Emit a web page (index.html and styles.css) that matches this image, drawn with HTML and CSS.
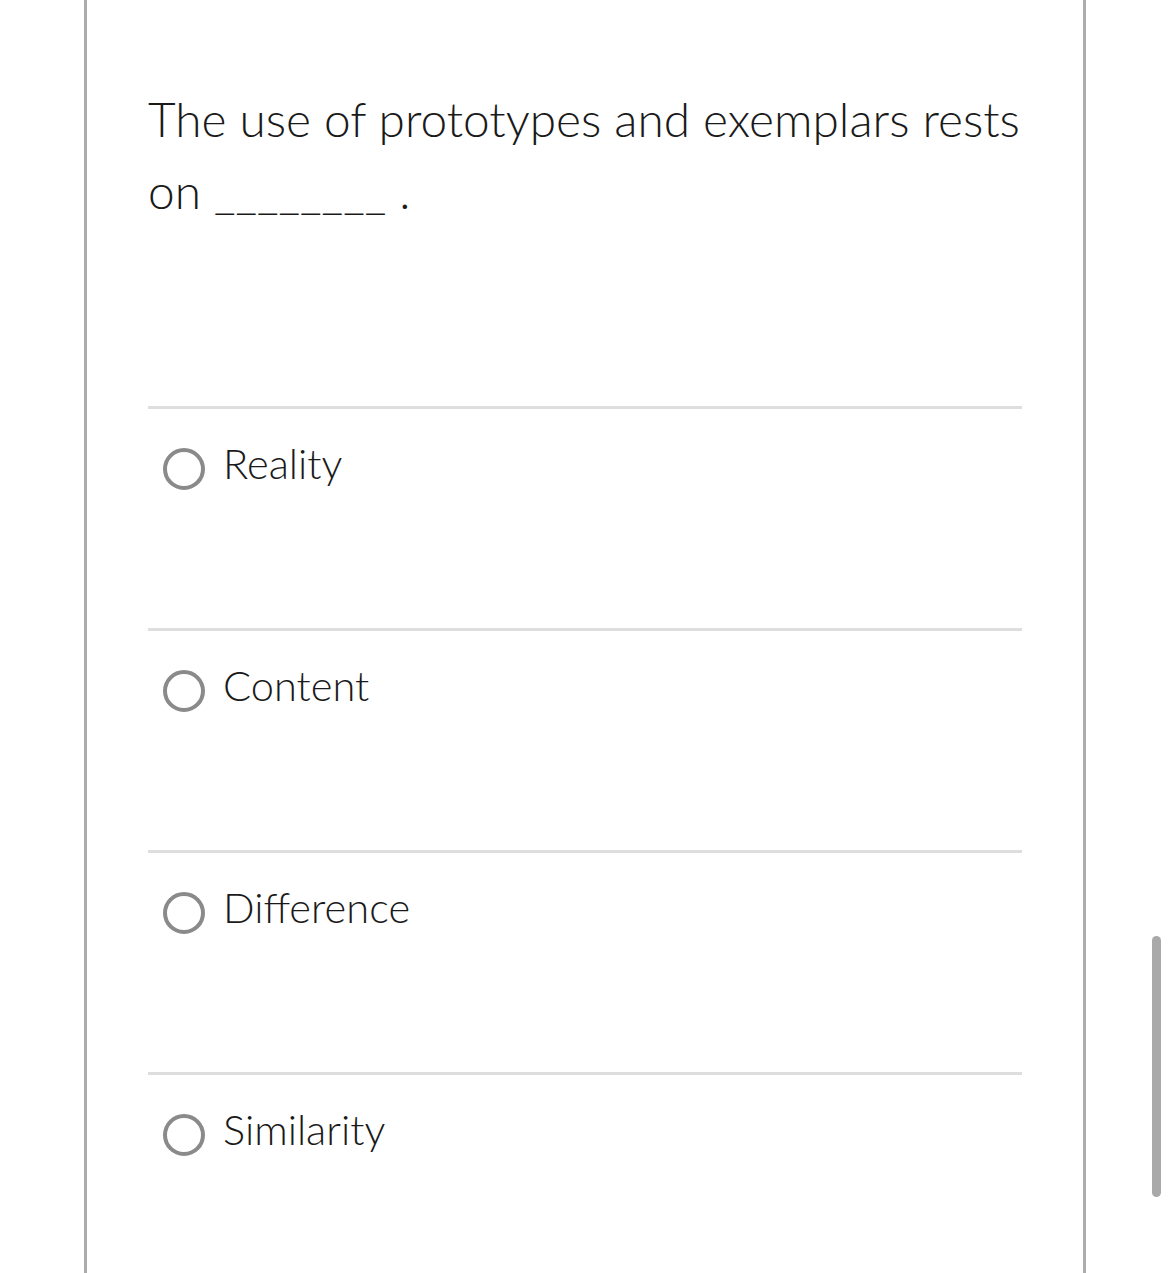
FILE: index.html
```html
<!DOCTYPE html>
<html lang="en">
<head>
<meta charset="utf-8">
<title>Question</title>
<link rel="stylesheet" href="styles.css">
</head>
<body>
<div class="frame">
  <div class="card">
    <p class="question">The use of prototypes and exemplars rests on ________ .</p>
    <ul class="options">
      <li class="option"><span class="radio"></span><span class="label">Reality</span></li>
      <li class="option"><span class="radio"></span><span class="label">Content</span></li>
      <li class="option"><span class="radio"></span><span class="label">Difference</span></li>
      <li class="option"><span class="radio"></span><span class="label">Similarity</span></li>
    </ul>
  </div>
  <div class="scrollbar"></div>
</div>
</body>
</html>
```

FILE: styles.css
```css
html, body {
  margin: 0;
  padding: 0;
  background: #ffffff;
}
body {
  font-family: Lato, "Open Sans", "Liberation Sans", sans-serif;
  color: #1a1a1a;
}
.frame {
  position: relative;
  width: 1170px;
  height: 1273px;
  overflow: hidden;
}
.card {
  margin-left: 84px;
  width: 874px;
  min-height: 1273px;
  border-left: 3px solid #acacac;
  border-right: 3px solid #acacac;
  padding: 83px 61px 0 61px;
  box-sizing: content-box;
}
.question {
  margin: 0 -4px 0 0;
  font-size: 47.8px;
  line-height: 72px;
  font-weight: 300;
  color: #1a1a1a;
}
.options {
  list-style: none;
  margin: 179px 0 0 0;
  padding: 0;
}
.option {
  display: flex;
  align-items: flex-start;
  height: 219px;
  border-top: 3px solid #dedede;
}
.radio {
  flex: none;
  width: 34px;
  height: 34px;
  border: 4px solid #8a8a8a;
  border-radius: 50%;
  margin: 39px 0 0 15px;
}
.label {
  margin: 30px 0 0 18px;
  font-size: 41.6px;
  line-height: 48px;
  font-weight: 300;
  color: #1a1a1a;
}
.scrollbar {
  position: absolute;
  left: 1152px;
  top: 936px;
  width: 9px;
  height: 261px;
  border-radius: 5px;
  background: #a9a9a9;
}
```
